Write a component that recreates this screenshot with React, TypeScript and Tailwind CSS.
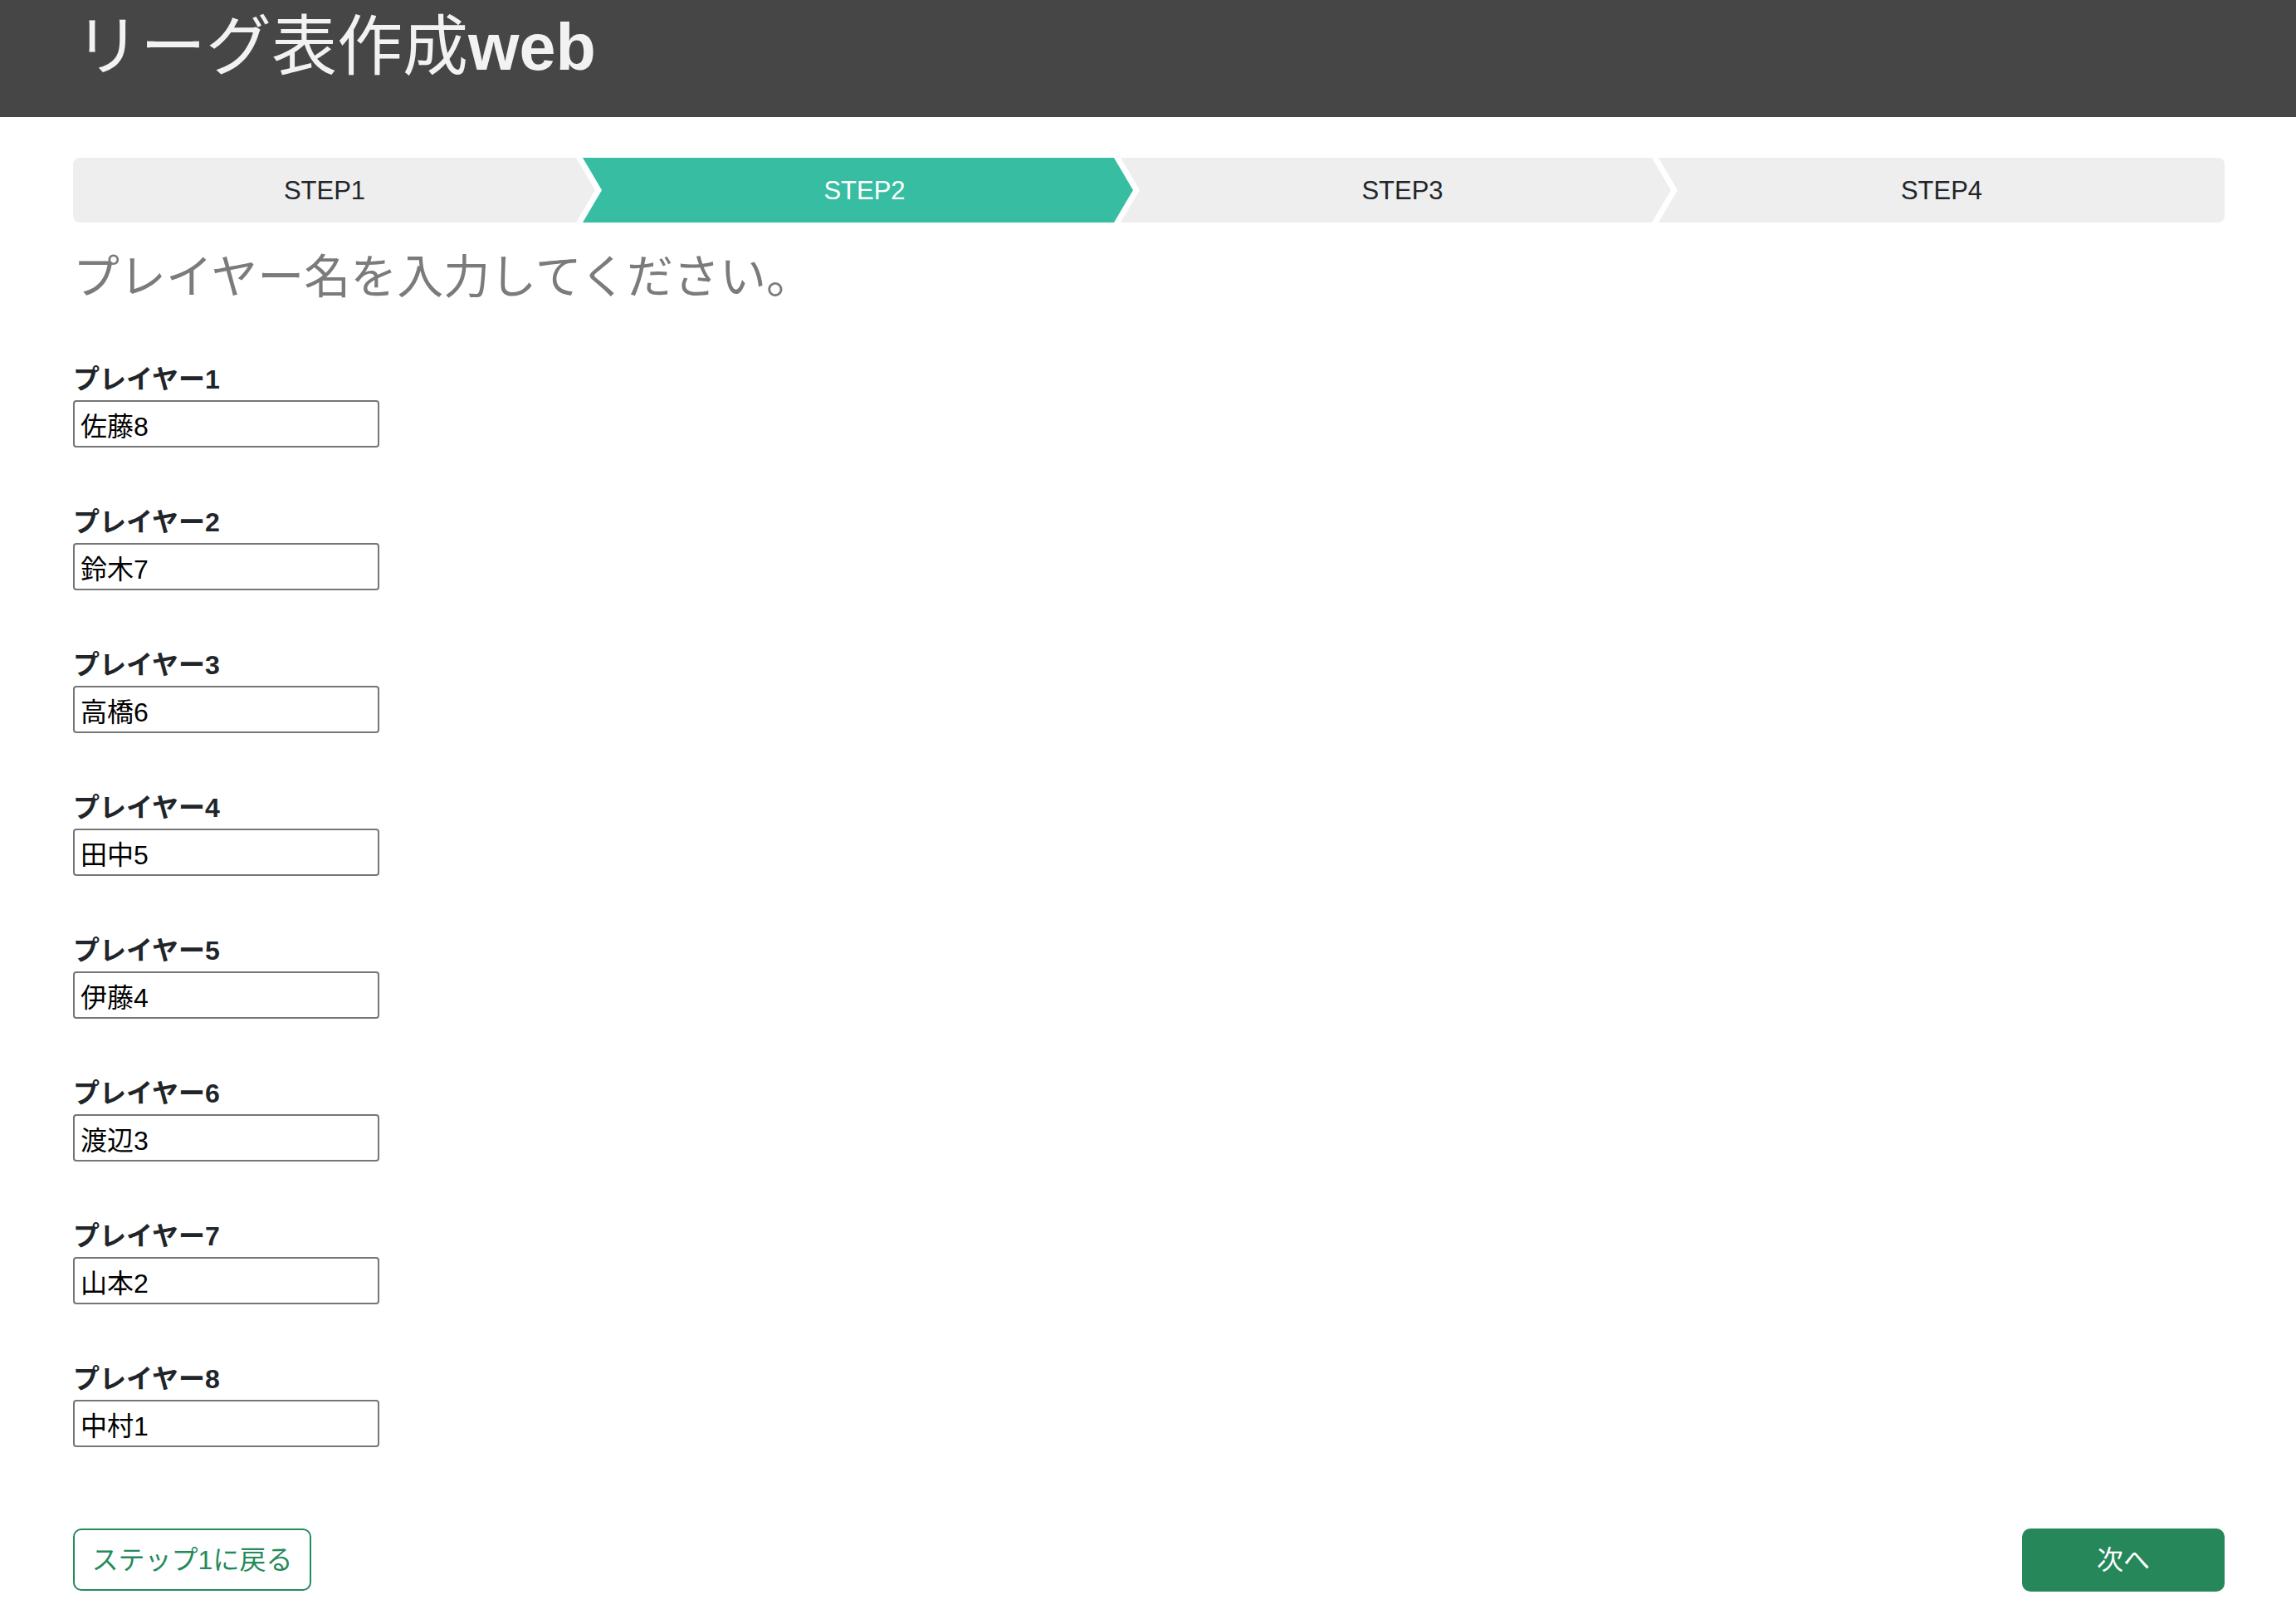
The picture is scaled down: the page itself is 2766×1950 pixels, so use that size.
import { useState } from "react";

const PLAYERS = ["佐藤8", "鈴木7", "高橋6", "田中5", "伊藤4", "渡辺3", "山本2", "中村1"];

const font = "font-['Liberation_Sans','Noto_Sans_CJK_JP',sans-serif]";

function StepBar() {
  return (
    <div className="flex h-[78px] w-full text-[31px] leading-none">
      <div className="flex h-full w-[629px] items-center justify-center rounded-l-[8px] bg-[#eeeeee] pr-[23px] text-[#212529] [clip-path:polygon(0_0,606px_0,629px_50%,606px_100%,0_100%)]">
        STEP1
      </div>
      <div className="-ml-[15px] flex h-full w-[663px] items-center justify-center bg-[#37bea2] pl-[16px] text-white [clip-path:polygon(0_0,640px_0,663px_50%,640px_100%,0_100%,23px_50%)]">
        STEP2
      </div>
      <div className="-ml-[15px] flex h-full w-[663px] items-center justify-center bg-[#eeeeee] pl-[16px] text-[#212529] [clip-path:polygon(0_0,640px_0,663px_50%,640px_100%,0_100%,23px_50%)]">
        STEP3
      </div>
      <div className="-ml-[15px] flex h-full flex-1 items-center justify-center rounded-r-[8px] bg-[#eeeeee] text-[#212529] [clip-path:polygon(0_0,100%_0,100%_100%,0_100%,23px_50%)]">
        STEP4
      </div>
    </div>
  );
}

export default function App() {
  const [names, setNames] = useState(PLAYERS);

  return (
    <div className={`min-h-screen bg-white ${font}`}>
      <header className="h-[141px] bg-[#464646] pt-[9px] pl-[90px]">
        <h1 className="text-[79px] leading-[96px] font-normal text-[#f2f2f2]">
          リーグ表作成<span className="font-bold">web</span>
        </h1>
      </header>

      <main className="pt-[49px] pr-[86px] pl-[88px]">
        <StepBar />

        <h2 className="mt-[32px] text-[56px] leading-[67px] font-normal text-[#7b7b7b]">
          プレイヤー名を入力してください。
        </h2>

        <div className="mt-[66px] flex flex-col gap-[66px]">
          {names.map((name, i) => (
            <div key={i} className="flex flex-col">
              <label className="text-[32px] leading-[48px] font-bold text-[#212529]">
                プレイヤー{i + 1}
              </label>
              <input
                type="text"
                value={name}
                onChange={(e) => setNames((prev) => prev.map((n, j) => (j === i ? e.target.value : n)))}
                className={`mt-[1px] h-[57px] w-[369px] rounded-[4px] border-2 border-[#767676] px-[7px] text-[32px] text-black outline-none ${font}`}
              />
            </div>
          ))}
        </div>

        <div className="mt-[98px] flex items-start justify-between">
          <button
            type="button"
            className="h-[75px] w-[287px] rounded-[10px] border-2 border-[#258a5a] bg-white text-[32px] text-[#258a5a]"
          >
            ステップ1に戻る
          </button>
          <button
            type="button"
            className="h-[76px] w-[244px] rounded-[10px] bg-[#25875a] text-[32px] text-white"
          >
            次へ
          </button>
        </div>
      </main>
    </div>
  );
}
